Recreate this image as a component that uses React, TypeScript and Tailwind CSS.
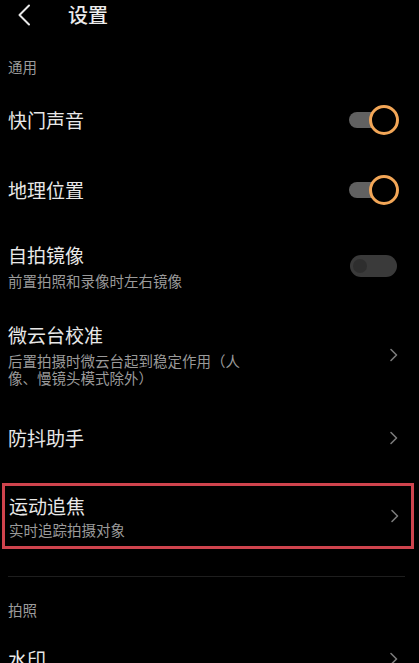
import { ReactNode } from 'react';

const font = { fontFamily: '"Noto Sans CJK SC", "Noto Sans", sans-serif' };

function Chevron() {
  return (
    <svg width="10" height="14" viewBox="0 0 10 14" fill="none" className="shrink-0">
      <path d="M2 1.5 L7.5 7 L2 12.5" stroke="#7a7a7a" strokeWidth="1.6" strokeLinecap="round" strokeLinejoin="round" />
    </svg>
  );
}

function Toggle({ on }: { on: boolean }) {
  if (on) {
    return (
      <div className="relative h-[30px] w-[50px] shrink-0">
        <div className="absolute left-0 top-[7px] h-[16px] w-[30px] rounded-full bg-[#616161]" />
        <div className="absolute right-0 top-0 h-[30px] w-[30px] rounded-full border-[3px] border-[#f2a657] bg-black" />
      </div>
    );
  }
  return (
    <div className="flex h-[22px] w-[47px] shrink-0 items-center rounded-full bg-[#3a3a3a] pl-[3px]">
      <div className="h-[14px] w-[14px] rounded-full bg-[#2e2e2e]" />
    </div>
  );
}

function Row({
  title,
  sub,
  right,
  className,
}: {
  title: string;
  sub?: string;
  right: ReactNode;
  className: string;
}) {
  return (
    <div className={`flex items-center justify-between pl-2 pr-[20px] ${className}`}>
      <div className="flex flex-col gap-[5px]">
        <span className="text-[19px] leading-[24px] text-[#e8e8e8]">{title}</span>
        {sub && (
          <span className="max-w-[240px] text-[14.5px] leading-[17px] text-[#9a9a9a]">{sub}</span>
        )}
      </div>
      {right}
    </div>
  );
}

export default function App() {
  return (
    <div className="h-[663px] w-[419px] overflow-hidden bg-black" style={font}>
      <div className="flex h-[30px] items-center">
        <svg width="14" height="22" viewBox="0 0 14 22" fill="none" className="ml-[17px]">
          <path d="M12 1.5 L2.5 11 L12 20.5" stroke="#e8e8e8" strokeWidth="2" strokeLinecap="round" strokeLinejoin="round" />
        </svg>
        <span className="ml-[37px] text-[20px] font-medium leading-[24px] text-[#ececec]">设置</span>
      </div>

      <div className="h-[55px] pl-2 pt-[27px] text-[14.5px] leading-[20px] text-[#9c9c9c]">通用</div>

      <Row title="快门声音" right={<Toggle on />} className="h-[70px]" />
      <Row title="地理位置" right={<Toggle on />} className="h-[70px]" />
      <Row
        title="自拍镜像"
        sub="前置拍照和录像时左右镜像"
        right={<Toggle on={false} />}
        className="h-[82px] !pr-[22px]"
      />
      <Row
        title="微云台校准"
        sub="后置拍摄时微云台起到稳定作用（人像、慢镜头模式除外）"
        right={<Chevron />}
        className="h-[95px]"
      />
      <Row title="防抖助手" right={<Chevron />} className="h-[72px]" />

      <div className="flex h-[84px] items-center pl-[2px] pr-[5px]">
        <div className="flex h-[66px] w-full items-center justify-between border-[3px] border-[#cf434d] pl-[4px] pr-[11px]">
          <div className="flex flex-col gap-[3px]">
            <span className="text-[19px] leading-[24px] text-[#e8e8e8]">运动追焦</span>
            <span className="text-[14.5px] leading-[17px] text-[#9a9a9a]">实时追踪拍摄对象</span>
          </div>
          <Chevron />
        </div>
      </div>

      <div className="ml-2 mr-[14px] mt-[18px] h-px bg-[#1e1e1e]" />

      <div className="h-[43px] pl-2 pt-[23px] text-[14.5px] leading-[20px] text-[#9c9c9c]">拍照</div>

      <div className="flex items-center justify-between pl-2 pr-[20px] pt-[27px]">
        <span className="text-[19px] leading-[24px] text-[#e8e8e8]">水印</span>
        <Chevron />
      </div>
    </div>
  );
}
